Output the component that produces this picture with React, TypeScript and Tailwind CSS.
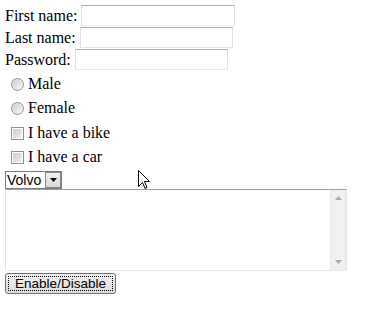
import React from "react";

const serif = { fontFamily: '"Liberation Serif", "Times New Roman", serif' };

function TextBox({ w }: { w: number }) {
  return (
    <div
      className="h-[21px] bg-white border border-t-[#abadb3] border-l-[#dbdfe6] border-r-[#dbdfe6] border-b-[#e3e9ef] rounded-[1px]"
      style={{ width: w }}
    />
  );
}

function Radio() {
  return (
    <div className="w-[13px] h-[13px] rounded-full border border-[#8f8f8f] bg-gradient-to-br from-[#dcdcdc] to-[#f6f6f6] flex items-center justify-center">
      <div className="w-[9px] h-[9px] rounded-full bg-gradient-to-br from-[#cfcfcf] to-[#f4f4f4]" />
    </div>
  );
}

function Check() {
  return (
    <div className="w-[13px] h-[13px] border border-[#8f8f8f] bg-white flex items-center justify-center">
      <div className="w-[9px] h-[9px] bg-gradient-to-br from-[#cbcbcb] to-[#f2f2f2]" />
    </div>
  );
}

export default function App() {
  return (
    <div className="relative w-[370px] h-[313px] bg-white text-black text-[16px]" style={serif}>
      <div className="pt-[5px] pl-[5px] flex flex-col">
        <div className="flex items-center h-[21px]">
          <span className="leading-[21px]">First name:</span>
          <div className="ml-[4px]"><TextBox w={154} /></div>
        </div>
        <div className="flex items-center h-[21px] mt-[1px]">
          <span className="leading-[21px]">Last name:</span>
          <div className="ml-[4px]"><TextBox w={153} /></div>
        </div>
        <div className="flex items-center h-[21px] mt-[1px]">
          <span className="leading-[21px]">Password:</span>
          <div className="ml-[4px]"><TextBox w={153} /></div>
        </div>

        <div className="flex items-center h-[24px] mt-[2px] pl-[6px]">
          <Radio />
          <span className="ml-[4px] leading-[24px]">Male</span>
        </div>
        <div className="flex items-center h-[24px] pl-[6px]">
          <Radio />
          <span className="ml-[4px] leading-[24px]">Female</span>
        </div>
        <div className="flex items-center h-[24px] mt-[1px] pl-[6px]">
          <Check />
          <span className="ml-[4px] leading-[24px]">I have a bike</span>
        </div>
        <div className="flex items-center h-[24px] pl-[6px]">
          <Check />
          <span className="ml-[4px] leading-[24px]">I have a car</span>
        </div>

        <div
          className="mt-[2px] w-[57px] h-[18px] border border-[#7a7a7a] bg-white flex items-center justify-between text-[14px]"
          style={{ fontFamily: '"Liberation Sans", Arial, sans-serif' }}
        >
          <span className="pl-[1px] leading-[16px]">Volvo</span>
          <div className="w-[16px] h-[16px] border border-[#8a8a8a] bg-gradient-to-b from-[#f2f2f2] to-[#d8d8d8] flex items-center justify-center">
            <svg width="7" height="4" viewBox="0 0 7 4">
              <path d="M0 0 H7 L3.5 4 Z" fill="#000" />
            </svg>
          </div>
        </div>

        <div className="w-[342px] h-[82px] border border-t-[#a0a0a0] border-l-[#e2e3ea] border-r-[#e2e3ea] border-b-[#e3e9ef] bg-white flex justify-end">
          <div className="w-[16px] h-full bg-[#f0f0f0] border-l border-[#e8e8e8] flex flex-col items-center justify-between py-[6px]">
            <svg width="7" height="4" viewBox="0 0 7 4">
              <path d="M0 4 H7 L3.5 0 Z" fill="#a8a8a8" />
            </svg>
            <svg width="7" height="4" viewBox="0 0 7 4">
              <path d="M0 0 H7 L3.5 4 Z" fill="#a8a8a8" />
            </svg>
          </div>
        </div>

        <div
          className="mt-[2px] w-[111px] h-[21px] rounded-[3px] border border-[#707070] bg-gradient-to-b from-[#f2f2f2] to-[#dcdcdc] p-[2px]"
          style={{ fontFamily: '"Liberation Sans", Arial, sans-serif' }}
        >
          <div className="w-full h-full border border-dotted border-black flex items-center justify-center text-[13.5px] leading-none">
            Enable/Disable
          </div>
        </div>
      </div>

      <svg className="absolute left-[138px] top-[170px]" width="13" height="21" viewBox="0 0 13 21">
        <path
          d="M0.5 0.5 V16.5 L4.5 12.5 L7 18.5 L9 17.5 L6.5 11.5 H11.5 Z"
          fill="#fff"
          stroke="#000"
          strokeWidth="1"
          strokeLinejoin="miter"
        />
      </svg>
    </div>
  );
}
